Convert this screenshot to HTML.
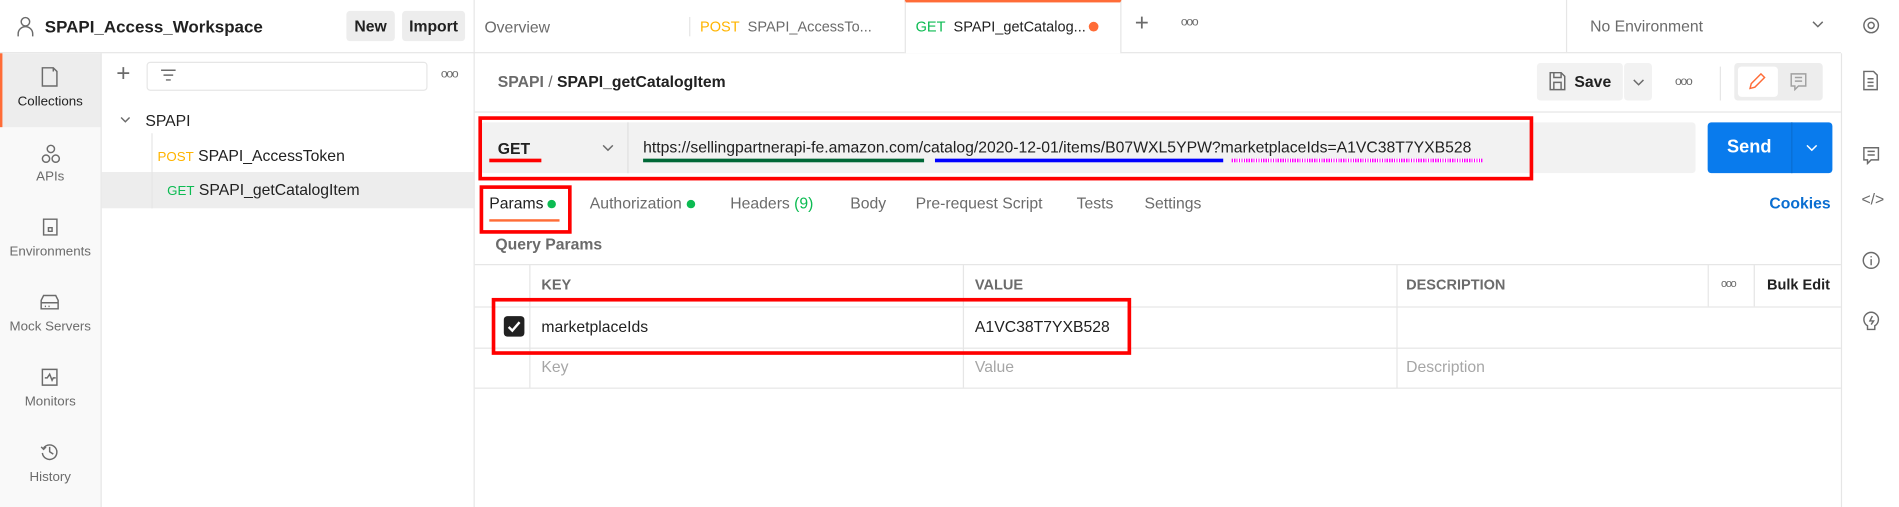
<!DOCTYPE html>
<html><head><meta charset="utf-8"><style>
*{margin:0;padding:0;box-sizing:border-box}
html,body{width:1899px;height:507px;overflow:hidden;background:#fff}
#w{position:absolute;left:0;top:0;width:1568px;height:419px;transform:scale(1.2111);transform-origin:0 0;font-family:"Liberation Sans",sans-serif;font-size:13px;color:#212121}
.a{position:absolute;white-space:nowrap}
.g{color:#6b6b6b}
.hl{position:absolute;background:#e6e6e6;height:1px}
.vl{position:absolute;background:#e6e6e6;width:1px}
.red{position:absolute;border:3px solid #f00}
.ic{position:absolute;fill:none;stroke:#6b6b6b;stroke-width:1.2}
</style></head><body><div id="w">
<!-- top bar -->
<div class="hl" style="left:0;top:43px;width:1520px"></div>
<svg class="ic" style="left:13px;top:13px" width="16" height="18" viewBox="0 0 16 18"><circle cx="8" cy="5" r="3.5"/><path d="M2 17v-2a6 6 0 0 1 12 0v2"/></svg>
<div class="a" style="left:37px;top:14px;font-weight:bold;font-size:14px">SPAPI_Access_Workspace</div>
<div class="a" style="left:286px;top:9px;width:40px;height:25px;background:#ededed;border-radius:3px;text-align:center;line-height:25px;font-weight:bold">New</div>
<div class="a" style="left:332px;top:9px;width:52px;height:25px;background:#ededed;border-radius:3px;text-align:center;line-height:25px;font-weight:bold">Import</div>
<div class="vl" style="left:391px;top:0;height:419px"></div>
<div class="a g" style="left:400px;top:15px">Overview</div>
<div class="vl" style="left:569px;top:14px;height:16px"></div>
<div class="a" style="left:578px;top:15px;font-size:12px"><span style="color:#ffb400">POST</span>&nbsp; <span class="g">SPAPI_AccessTo...</span></div>
<div class="a" style="left:747px;top:0;width:179px;height:44px;background:#fff;border-top:2px solid #ff6c37;border-left:1px solid #e6e6e6;border-right:1px solid #e6e6e6"></div>
<div class="a" style="left:756px;top:15px;font-size:12px"><span style="color:#0cbb52">GET</span>&nbsp; SPAPI_getCatalog...</div>
<div class="a" style="left:899px;top:18px;width:8px;height:8px;border-radius:50%;background:#ff6c37"></div>
<div class="a g" style="left:937px;top:8px;font-size:20px">+</div>
<div class="a g" style="left:975px;top:13px;font-size:10px;letter-spacing:-1px">ooo</div>
<div class="vl" style="left:1293px;top:0;height:43px"></div>
<div class="a g" style="left:1313px;top:14px">No Environment</div>
<svg class="ic" style="left:1496px;top:17px" width="10" height="7" viewBox="0 0 10 7"><path d="M1 1l4 4 4-4"/></svg>
<svg class="ic" style="left:1537px;top:13px" width="16" height="16" viewBox="0 0 16 16"><circle cx="8" cy="8" r="6"/><circle cx="8" cy="8" r="2.5"/></svg>
<!-- icon sidebar -->
<div class="a" style="left:0;top:44px;width:83px;height:375px;background:#f9f9f9"></div>
<div class="vl" style="left:83px;top:44px;height:375px"></div>
<div class="a" style="left:0;top:44px;width:83px;height:61px;background:#ededed;border-left:2px solid #ff6c37"></div>
<svg class="ic" style="left:34px;top:55px" width="14" height="17" viewBox="0 0 14 17"><path d="M1 1h9l3 3v12H1z"/><path d="M10 1v3"/></svg>
<div class="a" style="left:0;top:78px;width:83px;text-align:center;font-size:11px;color:#212121">Collections</div>
<svg class="ic" style="left:34px;top:119px" width="16" height="16" viewBox="0 0 16 16"><circle cx="8" cy="4" r="3"/><circle cx="4" cy="12" r="3"/><circle cx="12" cy="12" r="3"/></svg>
<div class="a g" style="left:0;top:140px;width:83px;text-align:center;font-size:11px">APIs</div>
<svg class="ic" style="left:35px;top:180px" width="13" height="15" viewBox="0 0 13 15"><path d="M1 1h11v13H1z"/><path d="M5 8h3v3H5z"/></svg>
<div class="a g" style="left:0;top:202px;width:83px;text-align:center;font-size:11px">Environments</div>
<svg class="ic" style="left:33px;top:243px" width="16" height="13" viewBox="0 0 16 13"><path d="M1 5l2-4h10l2 4v7H1z"/><path d="M1 7h14M4 10h1M7 10h1"/></svg>
<div class="a g" style="left:0;top:264px;width:83px;text-align:center;font-size:11px">Mock Servers</div>
<svg class="ic" style="left:34px;top:304px" width="14" height="15" viewBox="0 0 14 15"><path d="M1 1h12v13H1z"/><path d="M3 8h2l2-3 2 5 1-2h2"/></svg>
<div class="a g" style="left:0;top:326px;width:83px;text-align:center;font-size:11px">Monitors</div>
<svg class="ic" style="left:33px;top:365px" width="16" height="16" viewBox="0 0 16 16"><path d="M3 5a6 6 0 1 1-1 4"/><path d="M1 4l2 2 2-2M8 4v4l3 2"/></svg>
<div class="a g" style="left:0;top:388px;width:83px;text-align:center;font-size:11px">History</div>
<!-- collections panel -->
<div class="a g" style="left:96px;top:50px;font-size:20px;font-weight:300">+</div>
<div class="a" style="left:121px;top:51px;width:232px;height:24px;border:1px solid #e6e6e6;border-radius:3px"></div>
<svg class="ic" style="left:132px;top:57px" width="14" height="12" viewBox="0 0 14 12"><path d="M1 1h12M3 5h8M5 9h4"/></svg>
<div class="a g" style="left:364px;top:56px;font-size:10px;letter-spacing:-1px">ooo</div>
<svg class="ic" style="left:99px;top:96px" width="9" height="6" viewBox="0 0 9 6"><path d="M1 1l3.5 3.5L8 1"/></svg>
<div class="a" style="left:120px;top:92px">SPAPI</div>
<div class="vl" style="left:125px;top:110px;height:62px"></div>
<div class="a" style="left:130px;top:121px"><span style="color:#ffb400;font-size:11px">POST</span> SPAPI_AccessToken</div>
<div class="a" style="left:84px;top:142px;width:307px;height:30px;background:#ededed"></div>
<div class="vl" style="left:125px;top:142px;height:30px"></div>
<div class="a" style="left:138px;top:149px"><span style="color:#0cbb52;font-size:11px">GET</span> SPAPI_getCatalogItem</div>
<!-- main -->
<div class="a" style="left:411px;top:60px"><span class="g" style="font-weight:bold">SPAPI</span> <span class="g">/</span> <b>SPAPI_getCatalogItem</b></div>
<div class="a" style="left:1269px;top:52px;width:71px;height:31px;background:#f2f2f2;border-radius:3px"></div>
<svg class="ic" style="left:1279px;top:59px" width="14" height="16" viewBox="0 0 14 16"><path d="M1 1h9l3 3v11H1z"/><path d="M4 1v4h6V1M4 15V9h6v6"/></svg>
<div class="a" style="left:1300px;top:60px;font-weight:bold">Save</div>
<div class="a" style="left:1341px;top:52px;width:23px;height:31px;background:#f2f2f2;border-radius:3px"></div>
<svg class="ic" style="left:1348px;top:65px" width="10" height="6" viewBox="0 0 10 6"><path d="M1 1l4 4 4-4"/></svg>
<div class="a g" style="left:1383px;top:62px;font-size:10px;letter-spacing:-1px">ooo</div>
<div class="vl" style="left:1420px;top:55px;height:28px"></div>
<div class="a" style="left:1432px;top:52px;width:73px;height:31px;background:#ededed;border-radius:3px"></div>
<div class="a" style="left:1435px;top:55px;width:33px;height:25px;background:#fff;border-radius:3px"></div>
<svg class="ic" style="left:1443px;top:59px;stroke:#ff6c37" width="16" height="16" viewBox="0 0 16 16"><path d="M2 14l1-4 8-8 3 3-8 8z"/></svg>
<svg class="ic" style="left:1478px;top:60px;stroke:#a0a0a0" width="14" height="15" viewBox="0 0 14 15"><path d="M1 1h12v10H7l-3 3v-3H1z"/><path d="M4 4h6M4 7h6"/></svg>
<div class="hl" style="left:392px;top:92px;width:1128px"></div>
<!-- right bar -->
<div class="vl" style="left:1520px;top:44px;height:375px"></div>
<svg class="ic" style="left:1538px;top:58px" width="13" height="17" viewBox="0 0 13 17"><path d="M1 1h8l3 3v12H1z"/><path d="M4 7h5M4 10h5M4 13h5"/></svg>
<svg class="ic" style="left:1538px;top:121px" width="14" height="15" viewBox="0 0 14 15"><path d="M1 1h12v10H7l-3 3v-3H1z"/><path d="M4 4h6M4 7h6"/></svg>
<div class="a g" style="left:1537px;top:157px;font-size:13px">&lt;/&gt;</div>
<svg class="ic" style="left:1537px;top:207px" width="16" height="16" viewBox="0 0 16 16"><circle cx="8" cy="8" r="6.5"/><path d="M8 7v5M8 4.5v1"/></svg>
<svg class="ic" style="left:1537px;top:256px" width="16" height="18" viewBox="0 0 16 18"><path d="M5 13a6 6 0 1 1 6 0v3H5z"/><path d="M9 5l-2 4h3l-2 3"/></svg>
<!-- url bar -->
<div class="a" style="left:397px;top:101px;width:1003px;height:42px;background:#f2f2f2;border-radius:3px"></div>
<div class="vl" style="left:518px;top:101px;height:42px;background:#e0e0e0"></div>
<div class="a" style="left:411px;top:115px;font-weight:bold">GET</div>
<svg class="ic" style="left:497px;top:119px" width="10" height="6" viewBox="0 0 10 6"><path d="M1 1l4 4 4-4"/></svg>
<div class="a" style="left:531px;top:114px;font-size:13px">https://sellingpartnerapi-fe.amazon.com/catalog/2020-12-01/items/B07WXL5YPW?marketplaceIds=A1VC38T7YXB528</div>
<div class="a" style="left:404px;top:131px;width:43px;height:3px;background:#f00"></div>
<div class="a" style="left:531px;top:131px;width:232px;height:3px;background:#006837"></div>
<div class="a" style="left:772px;top:131px;width:238px;height:3px;background:#0000ff"></div>
<div class="a" style="left:1017px;top:131px;width:207px;height:3px;background:repeating-linear-gradient(90deg,#f0f 0 1px,#fff 1px 2px)"></div>
<div class="red" style="left:395px;top:96px;width:871px;height:53px"></div>
<div class="a" style="left:1410px;top:101px;width:103px;height:42px;background:#097bed;border-radius:3px"></div>
<div class="a" style="left:1479px;top:101px;width:1px;height:42px;background:#0a6ed1"></div>
<div class="a" style="left:1426px;top:113px;color:#fff;font-weight:bold;font-size:15px">Send</div>
<svg class="ic" style="left:1491px;top:119px;stroke:#fff" width="10" height="6" viewBox="0 0 10 6"><path d="M1 1l4 4 4-4"/></svg>
<!-- tabs -->
<div class="a" style="left:404px;top:160px">Params <span style="display:inline-block;width:7px;height:7px;border-radius:50%;background:#0cbb52"></span></div>
<div class="a" style="left:404px;top:181px;width:58px;height:2px;background:#ff6c37"></div>
<div class="red" style="left:396px;top:153px;width:76px;height:40px"></div>
<div class="a g" style="left:487px;top:160px">Authorization <span style="display:inline-block;width:7px;height:7px;border-radius:50%;background:#0cbb52"></span></div>
<div class="a g" style="left:603px;top:160px">Headers <span style="color:#0cbb52">(9)</span></div>
<div class="a g" style="left:702px;top:160px">Body</div>
<div class="a g" style="left:756px;top:160px">Pre-request Script</div>
<div class="a g" style="left:889px;top:160px">Tests</div>
<div class="a g" style="left:945px;top:160px">Settings</div>
<div class="a" style="left:1461px;top:160px;color:#0a6ed1;font-weight:bold">Cookies</div>
<div class="a g" style="left:409px;top:194px;font-weight:bold">Query Params</div>
<!-- table -->
<div class="hl" style="left:392px;top:218px;width:1128px"></div>
<div class="hl" style="left:392px;top:253px;width:1128px"></div>
<div class="hl" style="left:392px;top:287px;width:1128px"></div>
<div class="hl" style="left:392px;top:320px;width:1128px"></div>
<div class="vl" style="left:437px;top:218px;height:102px"></div>
<div class="vl" style="left:795px;top:218px;height:102px"></div>
<div class="vl" style="left:1153px;top:218px;height:102px"></div>
<div class="vl" style="left:1410px;top:218px;height:35px"></div>
<div class="vl" style="left:1448px;top:218px;height:35px"></div>
<div class="a g" style="left:447px;top:228px;font-weight:bold;font-size:12px">KEY</div>
<div class="a g" style="left:805px;top:228px;font-weight:bold;font-size:12px">VALUE</div>
<div class="a g" style="left:1161px;top:228px;font-weight:bold;font-size:12px">DESCRIPTION</div>
<div class="a g" style="left:1421px;top:229px;font-size:9px;letter-spacing:-1px">ooo</div>
<div class="a" style="left:1459px;top:228px;font-weight:bold;font-size:12px">Bulk Edit</div>
<div class="a" style="left:416px;top:261px;width:17px;height:17px;background:#212121;border-radius:3px"></div>
<svg class="ic" style="left:418px;top:263px;stroke:#fff;stroke-width:2" width="13" height="13" viewBox="0 0 13 13"><path d="M2 7l3 3 6-7"/></svg>
<div class="a" style="left:447px;top:262px">marketplaceIds</div>
<div class="a" style="left:805px;top:262px">A1VC38T7YXB528</div>
<div class="red" style="left:406px;top:246px;width:528px;height:47px"></div>
<div class="a" style="left:447px;top:295px;color:#a6a6a6">Key</div>
<div class="a" style="left:805px;top:295px;color:#a6a6a6">Value</div>
<div class="a" style="left:1161px;top:295px;color:#a6a6a6">Description</div>
</div></body></html>
